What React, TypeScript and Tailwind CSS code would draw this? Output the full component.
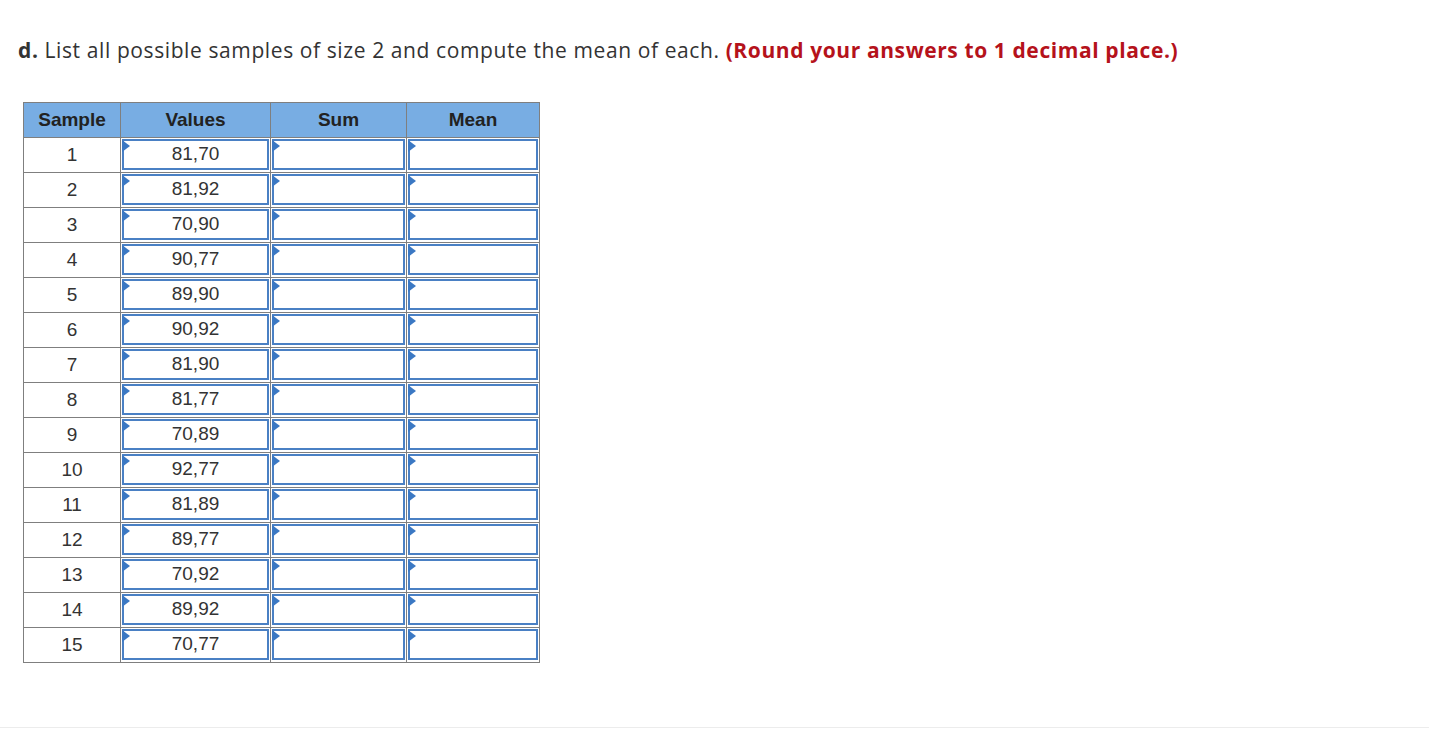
import React from 'react'

const rows = [
  '81,70', '81,92', '70,90', '90,77', '89,90', '90,92', '81,90', '81,77',
  '70,89', '92,77', '81,89', '89,77', '70,92', '89,92', '70,77',
]

function InputCell({ value }: { value?: string }) {
  return (
    <td className="border border-[#7f7f7f] p-0">
      <div className="relative mx-px mt-px mb-[2px] h-[31px] border-2 border-[#4a80c4] bg-white flex items-center justify-center text-[19px] text-[#333]">
        <span className="absolute -left-[2px] -top-[1px] w-0 h-0 border-y-[6px] border-y-transparent border-l-[8px] border-l-[#3b78c3]" />
        {value}
      </div>
    </td>
  )
}

export default function App() {
  return (
    <div className="w-[1429px] h-[737px] bg-white relative" style={{ fontFamily: 'Liberation Sans, Arial, sans-serif' }}>
      <div className="pt-[35px] pl-[18px]">
        <p className="text-[21px] leading-[30px] tracking-[0.6px] text-[#333]" style={{ fontFamily: '"Open Sans", sans-serif' }}>
          <b>d.</b> List all possible samples of size 2 and compute the mean of each.{' '}
          <b className="text-[#b5121b]">(Round your answers to 1 decimal place.)</b>
        </p>
      </div>

      <table className="ml-[23px] mt-[37px] border-collapse">
        <thead>
          <tr className="h-[35px] bg-[#78ade3] text-[19px] font-bold text-[#222]">
            <th className="w-[97px] border border-[#7f7f7f] font-bold">Sample</th>
            <th className="w-[150px] border border-[#7f7f7f] font-bold">Values</th>
            <th className="w-[136px] border border-[#7f7f7f] font-bold">Sum</th>
            <th className="w-[133px] border border-[#7f7f7f] font-bold">Mean</th>
          </tr>
        </thead>
        <tbody>
          {rows.map((v, i) => (
            <tr key={i} className="h-[35px]">
              <td className="border border-[#7f7f7f] text-center text-[19px] text-[#333]">{i + 1}</td>
              <InputCell value={v} />
              <InputCell />
              <InputCell />
            </tr>
          ))}
        </tbody>
      </table>

      <div className="absolute left-0 right-0 top-[727px] h-px bg-[#ececec]" />
    </div>
  )
}
